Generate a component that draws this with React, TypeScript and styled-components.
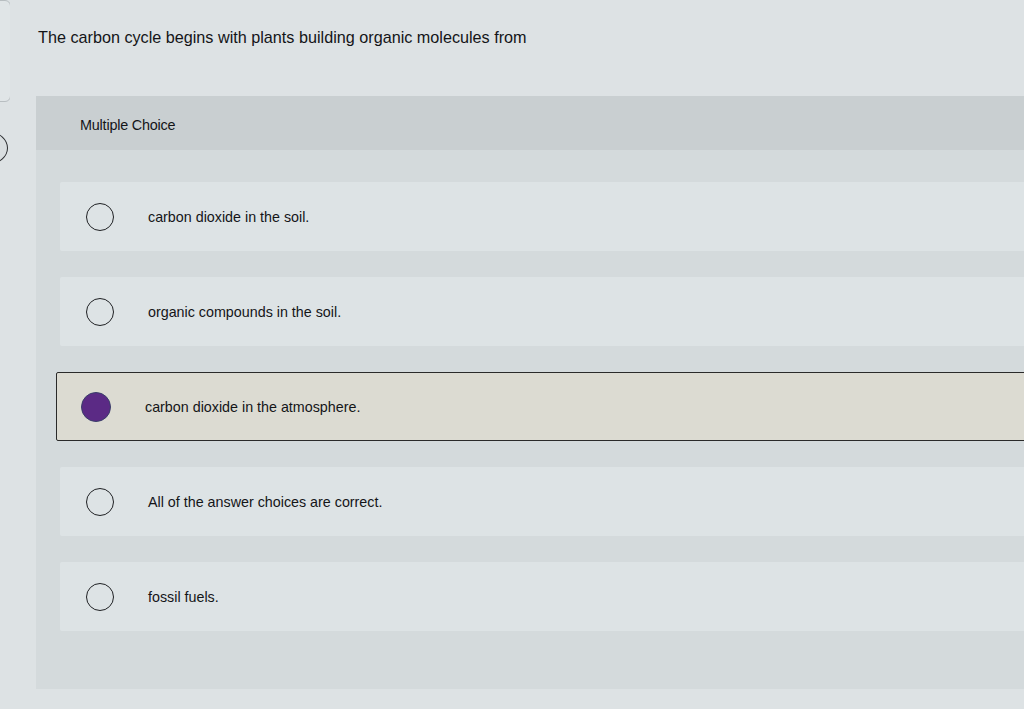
import styled, { createGlobalStyle } from "styled-components";

const GlobalStyle = createGlobalStyle`
  html, body {
    margin: 0;
    padding: 0;
    background: #dde2e4;
    font-family: "Liberation Sans", Arial, sans-serif;
    color: #141518;
    overflow: hidden;
  }
`;

const Page = styled.div`
  display: flex;
  width: 1024px;
  height: 709px;
  overflow: hidden;
`;

const Rail = styled.aside`
  width: 10px;
  flex-shrink: 0;
  overflow: hidden;
  display: flex;
  flex-direction: column;
`;

const RailCard = styled.div`
  width: 40px;
  height: 100px;
  margin-left: -31px;
  border: 1px solid #b8bec1;
  border-radius: 6px;
  background: #e0e5e7;
`;

const RailButton = styled.div`
  width: 34px;
  height: 30px;
  margin: 30px 0 0 -28px;
  border: 1.5px solid #2b2d30;
  border-radius: 50%;
  background: #d9dee0;
`;

const Main = styled.main`
  flex: 1;
  padding-left: 26px;
  display: flex;
  flex-direction: column;
`;

const Question = styled.p`
  margin: 27px 0 0 2px;
  font-size: 16.2px;
  line-height: 20px;
  height: 69px;
`;

const Panel = styled.section`
  margin-right: -20px;
  background: #d4dadc;
  padding-bottom: 58px;
`;

const PanelHeader = styled.header`
  height: 54px;
  display: flex;
  align-items: center;
  padding: 4px 0 0 44px;
  box-sizing: border-box;
  background: #c9cfd1;
  font-size: 14.4px;
  letter-spacing: -0.2px;
`;

const Choices = styled.div`
  display: flex;
  flex-direction: column;
  gap: 26px;
  padding: 32px 0 0 24px;
`;

const Choice = styled.label<{ $selected?: boolean }>`
  display: flex;
  align-items: center;
  gap: 34px;
  height: 69px;
  box-sizing: border-box;
  padding-left: ${(p) => (p.$selected ? "24px" : "26px")};
  margin-left: ${(p) => (p.$selected ? "-4px" : "0")};
  background: ${(p) => (p.$selected ? "#dcdbd2" : "#dde3e5")};
  border: ${(p) => (p.$selected ? "1.5px solid #2a2a2a" : "none")};
  border-radius: 2px;
  font-size: 14.3px;
`;

const Radio = styled.span<{ $checked?: boolean }>`
  width: ${(p) => (p.$checked ? "30px" : "28px")};
  height: ${(p) => (p.$checked ? "30px" : "28px")};
  box-sizing: border-box;
  border-radius: 50%;
  border: ${(p) => (p.$checked ? "1.5px solid #3a3f6a" : "1.5px solid #1f2124")};
  background: ${(p) => (p.$checked ? "#5b2a85" : "transparent")};
  flex-shrink: 0;
`;

const choices = [
  "carbon dioxide in the soil.",
  "organic compounds in the soil.",
  "carbon dioxide in the atmosphere.",
  "All of the answer choices are correct.",
  "fossil fuels.",
];

const selectedIndex = 2;

export default function App() {
  return (
    <>
      <GlobalStyle />
      <Page>
        <Rail>
          <RailCard />
          <RailButton />
        </Rail>
        <Main>
          <Question>The carbon cycle begins with plants building organic molecules from</Question>
          <Panel>
            <PanelHeader>Multiple Choice</PanelHeader>
            <Choices>
              {choices.map((text, i) => (
                <Choice key={text} $selected={i === selectedIndex}>
                  <Radio $checked={i === selectedIndex} />
                  {text}
                </Choice>
              ))}
            </Choices>
          </Panel>
        </Main>
      </Page>
    </>
  );
}
